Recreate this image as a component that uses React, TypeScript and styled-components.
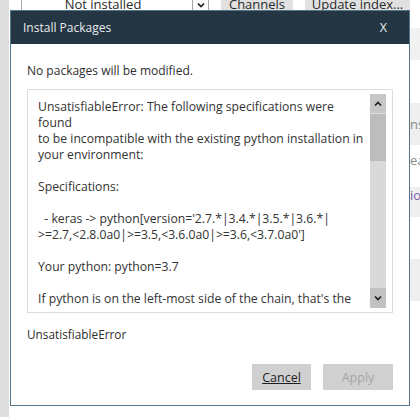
import styled, { createGlobalStyle } from "styled-components";

const GlobalStyle = createGlobalStyle`
  html, body {
    margin: 0;
    padding: 0;
    background: #ffffff;
  }
  body {
    font-family: "Open Sans", "Noto Sans", sans-serif;
    font-size: 12px;
    color: #333333;
  }
`;

interface BackRow {
  height: number;
  shade?: string;
  text?: string;
  textColor?: string;
  textTop?: number;
}

const backRows: BackRow[] = [
  { height: 18 },
  { height: 32, shade: "#f1f1f1" },
  { height: 43 },
  { height: 42, shade: "#efefef", text: "ns", textColor: "#8a8a8a", textTop: 13 },
  { height: 42, text: "ea", textColor: "#8a8a8a", textTop: 7 },
  { height: 30, shade: "#efefef", text: "io", textColor: "#7b5ca8", textTop: 0 },
  { height: 42 },
  { height: 42, shade: "#efefef" },
];

const detailLines = [
  "UnsatisfiableError: The following specifications were",
  "found",
  "to be incompatible with the existing python installation in",
  "your environment:",
  "",
  "Specifications:",
  "",
  "  - keras -> python[version='2.7.*|3.4.*|3.5.*|3.6.*|",
  ">=2.7,<2.8.0a0|>=3.5,<3.6.0a0|>=3.6,<3.7.0a0']",
  "",
  "Your python: python=3.7",
  "",
  "If python is on the left-most side of the chain, that's the",
  "version you've asked for.",
];

const Chevron = ({ up }: { up?: boolean }) => (
  <svg width="8" height="5" viewBox="0 0 8 5">
    <polyline
      points={up ? "1,4.5 4,1.5 7,4.5" : "1,0.5 4,3.5 7,0.5"}
      fill="none"
      stroke="#1e1e1e"
      strokeWidth="1.6"
    />
  </svg>
);

export default function App() {
  return (
    <>
      <GlobalStyle />
      <Page>
        <SideStrip />
        <Main>
          <Toolbar>
            <Combo>
              <ComboText>Not installed</ComboText>
              <ComboArrow>
                <Chevron />
              </ComboArrow>
            </Combo>
            <ToolButton width={72}>Channels</ToolButton>
            <ToolButton width={105}>Update index...</ToolButton>
          </Toolbar>
          <PackageArea>
            <PackageColumn>
              {backRows.map((row, i) => (
                <PackageRow key={i} height={row.height} shade={row.shade}>
                  {row.text && (
                    <RowText color={row.textColor} top={row.textTop ?? 0}>
                      {row.text}
                    </RowText>
                  )}
                </PackageRow>
              ))}
            </PackageColumn>
          </PackageArea>
        </Main>

        <Dialog>
          <TitleBar>
            <Title>Install Packages</Title>
            <CloseButton>X</CloseButton>
          </TitleBar>
          <DialogBody>
            <Message>No packages will be modified.</Message>
            <DetailsBox>
              <DetailsText>{detailLines.join("\n")}</DetailsText>
              <ScrollBar>
                <ScrollArrow>
                  <Chevron up />
                </ScrollArrow>
                <ScrollThumb />
                <ScrollTrack />
                <ScrollArrow dark>
                  <Chevron />
                </ScrollArrow>
              </ScrollBar>
            </DetailsBox>
            <Status>UnsatisfiableError</Status>
            <Actions>
              <DialogButton width={59} underline>
                Cancel
              </DialogButton>
              <DialogButton width={70} disabled>
                Apply
              </DialogButton>
            </Actions>
          </DialogBody>
        </Dialog>
      </Page>
    </>
  );
}

const Page = styled.div`
  position: relative;
  width: 420px;
  height: 417px;
  overflow: hidden;
  display: flex;
`;

const SideStrip = styled.div`
  width: 9px;
  flex-shrink: 0;
  background: #dedede;
`;

const Main = styled.div`
  flex: 1;
  display: flex;
  flex-direction: column;
  min-width: 0;
`;

const Toolbar = styled.div`
  height: 10px;
  display: flex;
  gap: 12px;
  padding-left: 12px;
  overflow: hidden;
  font-size: 13px;
  color: #2b2b2b;
`;

const Combo = styled.div`
  width: 188px;
  height: 10px;
  box-sizing: border-box;
  display: flex;
  border-left: 1px solid #a8a8a8;
  border-right: 1px solid #a8a8a8;
`;

const ComboText = styled.div`
  flex: 1;
  text-align: center;
  line-height: 9px;
  padding-right: 8px;
`;

const ComboArrow = styled.div`
  width: 15px;
  border-left: 1px solid #a8a8a8;
  display: flex;
  justify-content: center;
  align-items: center;
  padding-top: 1px;
`;

const ToolButton = styled.div<{ width: number }>`
  width: ${(p) => p.width}px;
  height: 10px;
  background: #e1e1e1;
  text-align: center;
  line-height: 9px;
  white-space: nowrap;
`;

const PackageArea = styled.div`
  flex: 1;
  display: flex;
  justify-content: flex-end;
`;

const PackageColumn = styled.div`
  width: 10px;
  display: flex;
  flex-direction: column;
  overflow: hidden;
`;

const PackageRow = styled.div<{ height: number; shade?: string }>`
  height: ${(p) => p.height}px;
  flex-shrink: 0;
  background: ${(p) => p.shade ?? "transparent"};
`;

const RowText = styled.div<{ color?: string; top: number }>`
  padding-top: ${(p) => p.top}px;
  line-height: 16px;
  font-size: 13px;
  color: ${(p) => p.color ?? "#888"};
`;

const Dialog = styled.div`
  position: absolute;
  left: 10px;
  top: 10px;
  width: 400px;
  height: 396px;
  box-sizing: border-box;
  border: 1px solid #52768a;
  background: #ffffff;
  display: flex;
  flex-direction: column;
`;

const TitleBar = styled.div`
  height: 32px;
  flex-shrink: 0;
  background: #243544;
  display: flex;
  align-items: center;
  justify-content: space-between;
  padding: 0 22px 1px 12px;
  color: #e9ecee;
  font-size: 12px;
`;

const Title = styled.div``;

const CloseButton = styled.div`
  font-size: 12.5px;
`;

const DialogBody = styled.div`
  flex: 1;
  display: flex;
  flex-direction: column;
  padding: 0 16px 15px 16px;
`;

const Message = styled.div`
  margin-top: 19px;
  line-height: 16px;
  font-size: 12px;
  color: #2e2e2e;
`;

const DetailsBox = styled.div`
  margin-top: 10px;
  height: 224px;
  box-sizing: border-box;
  border: 1px solid #dcdcdc;
  display: flex;
  padding: 4px 6px 4px 10px;
`;

const DetailsText = styled.div`
  flex: 1;
  overflow: hidden;
  padding-top: 5px;
  white-space: pre;
  line-height: 16px;
  font-size: 12.2px;
  color: #333333;
`;

const ScrollBar = styled.div`
  width: 16px;
  display: flex;
  flex-direction: column;
  background: #d9d9d9;
`;

const ScrollArrow = styled.div<{ dark?: boolean }>`
  height: 20px;
  flex-shrink: 0;
  background: ${(p) => (p.dark ? "#c2c2c2" : "#c7c7c7")};
  display: flex;
  align-items: center;
  justify-content: center;
  border-bottom: ${(p) => (p.dark ? "none" : "1px solid #dedede")};
  box-sizing: border-box;
`;

const ScrollThumb = styled.div`
  height: 47px;
  background: #bdbdbd;
`;

const ScrollTrack = styled.div`
  flex: 1;
  background: #d9d9d9;
`;

const Status = styled.div`
  margin-top: 13px;
  line-height: 16px;
  font-size: 11.8px;
  color: #2e2e2e;
`;

const Actions = styled.div`
  margin-top: auto;
  display: flex;
  justify-content: flex-end;
  gap: 12px;
`;

const DialogButton = styled.div<{
  width: number;
  underline?: boolean;
  disabled?: boolean;
}>`
  width: ${(p) => p.width}px;
  height: 26px;
  background: #d0d0d0;
  display: flex;
  align-items: center;
  justify-content: center;
  font-size: 12.5px;
  color: ${(p) => (p.disabled ? "#a6a6a6" : "#1e1e1e")};
  text-decoration: ${(p) => (p.underline ? "underline" : "none")};
`;
